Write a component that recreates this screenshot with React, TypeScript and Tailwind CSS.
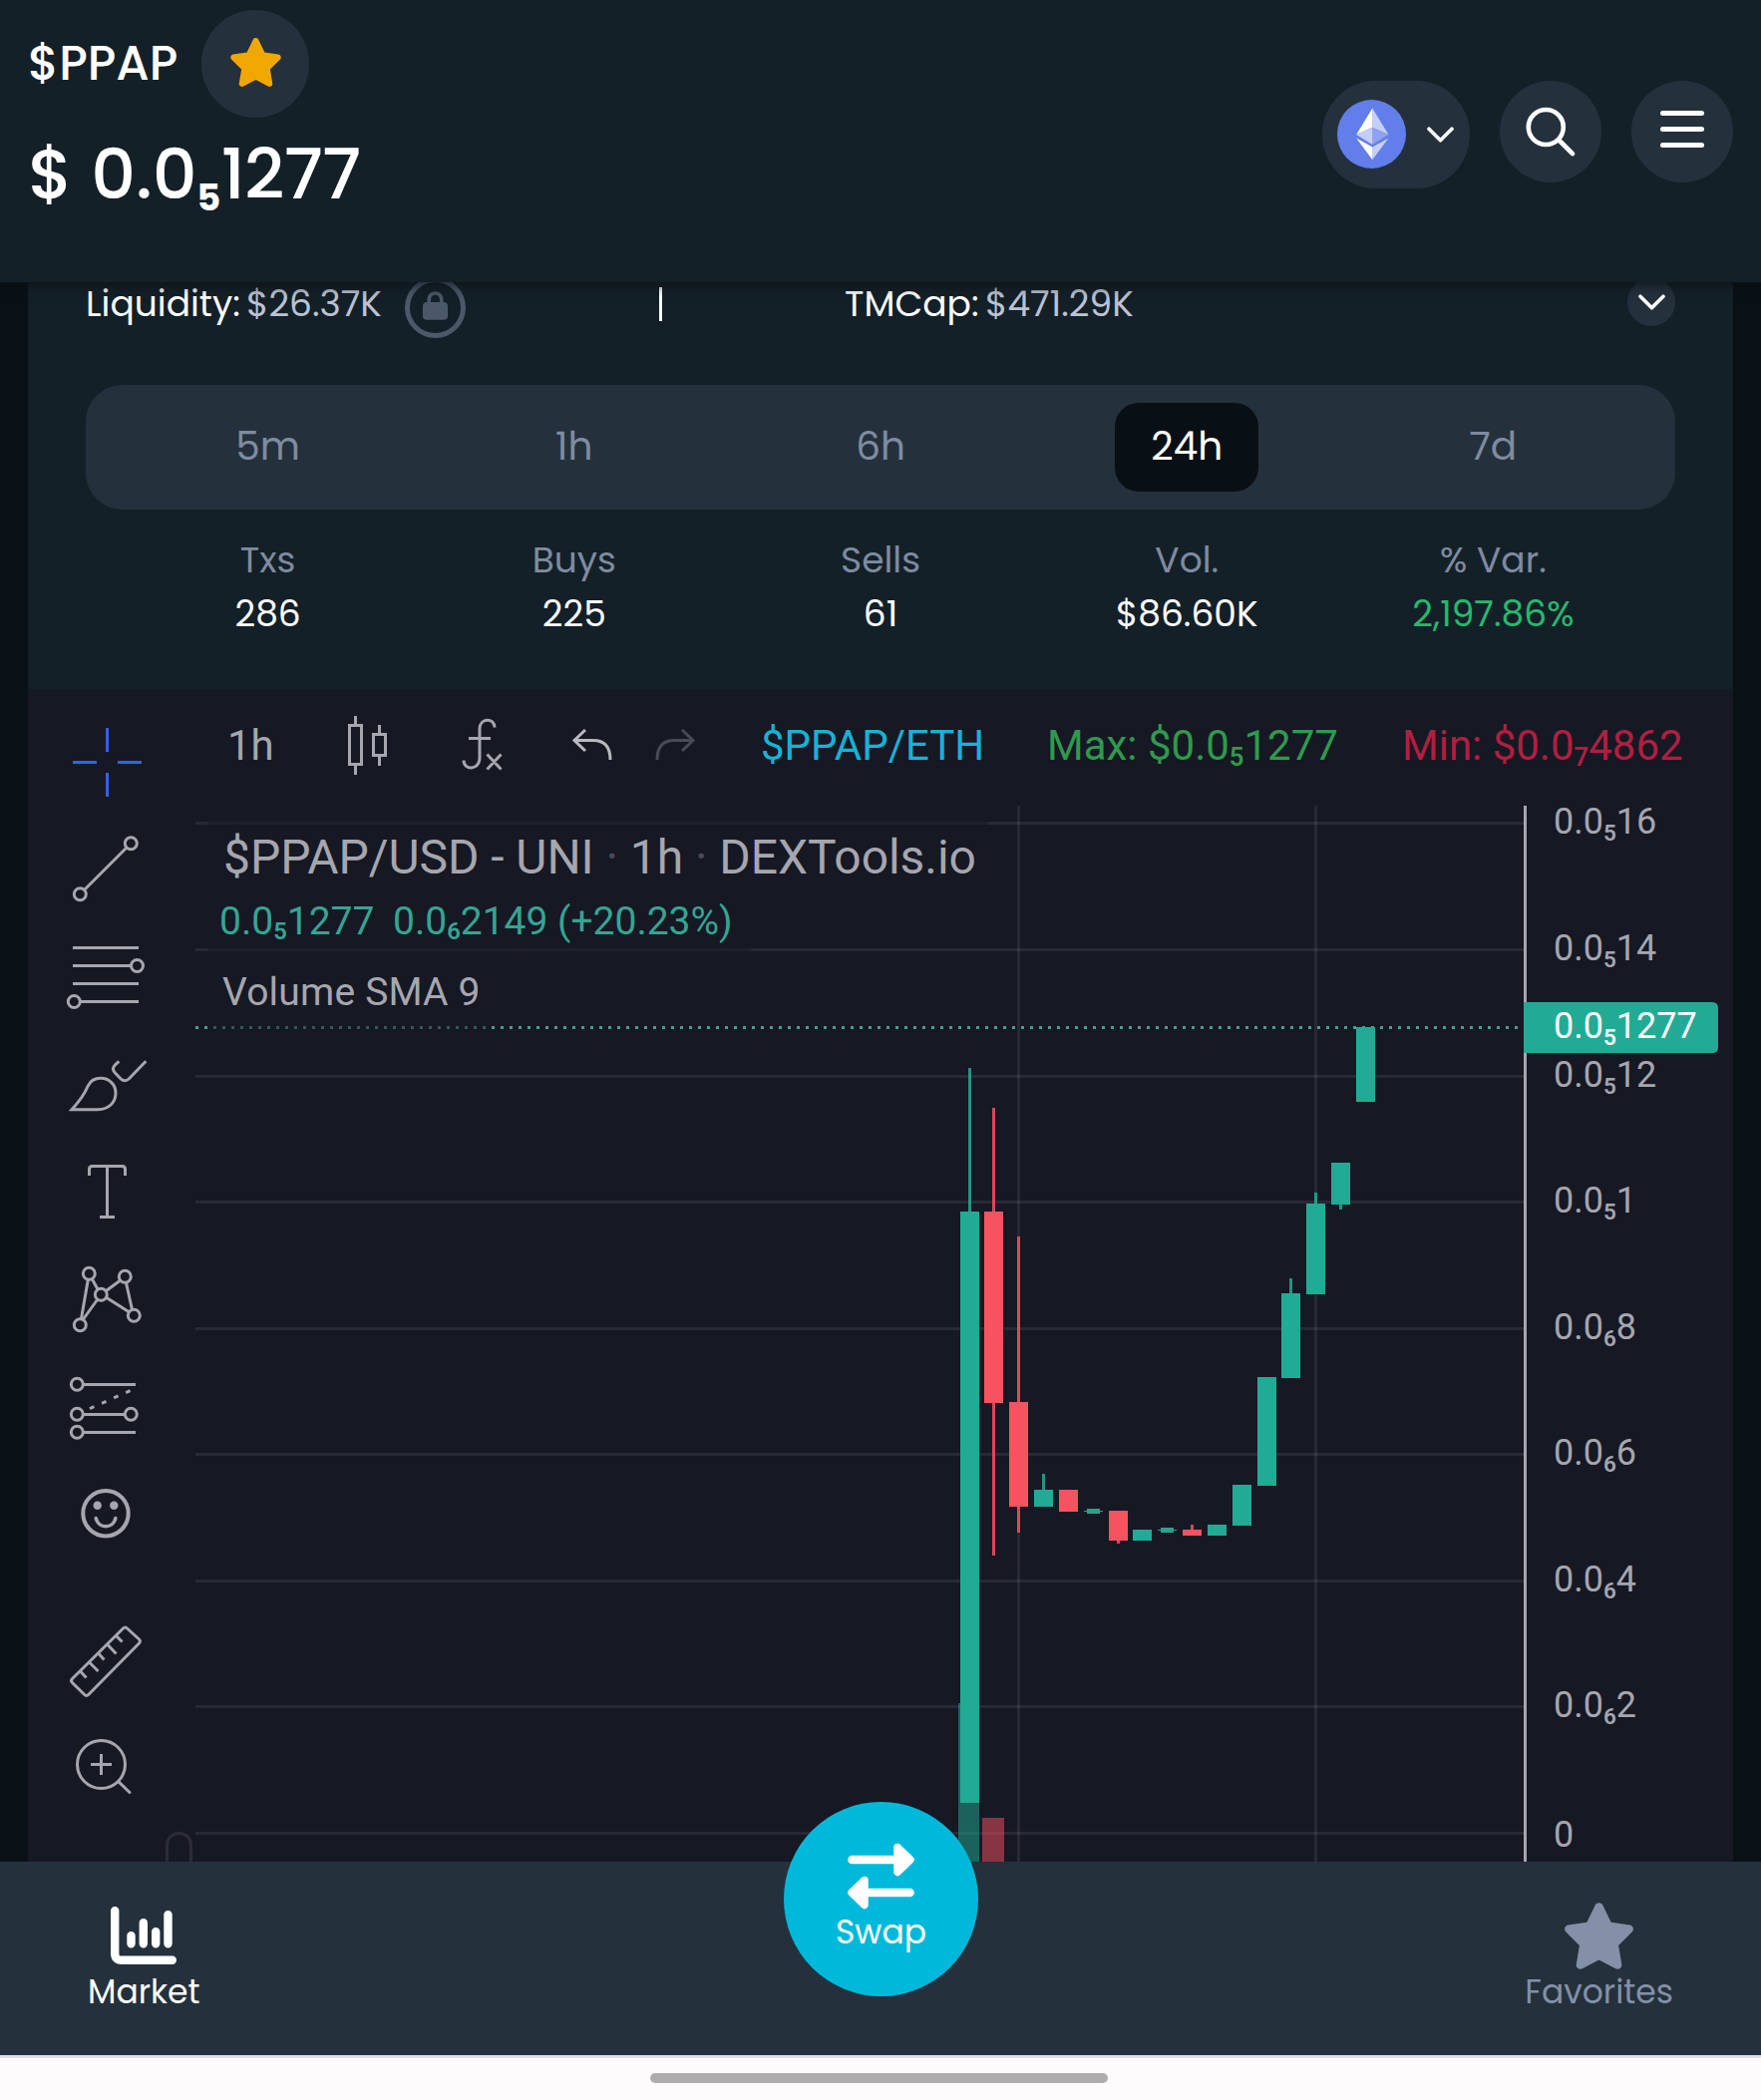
import type { ReactNode } from "react";
import { clsx } from "clsx";
import { FaLock, FaStar } from "react-icons/fa6";

const UP = "#22ab94";
const DOWN = "#f7525f";

const stats = [
  { tab: "5m", label: "Txs", value: "286" },
  { tab: "1h", label: "Buys", value: "225" },
  { tab: "6h", label: "Sells", value: "61" },
  { tab: "24h", label: "Vol.", value: "$86.60K", active: true },
  { tab: "7d", label: "% Var.", value: "2,197.86%", positive: true },
];

// plot coordinates: x, body top, body bottom, wick top, wick bottom, colour
const candles: [number, number, number, number, number, string][] = [
  [767, 407, 1000, 263, 1000, UP],
  [791, 407, 599, 303, 752, DOWN],
  [816, 598, 703, 432, 729, DOWN],
  [841, 686, 703, 670, 703, UP],
  [866, 686, 708, 686, 708, DOWN],
  [916, 707, 737, 707, 740, DOWN],
  [940, 726, 737, 726, 737, UP],
  [990, 726, 732, 721, 732, DOWN],
  [1015, 721, 732, 721, 732, UP],
  [1040, 681, 722, 681, 722, UP],
  [1065, 573, 682, 573, 682, UP],
  [1089, 489, 574, 474, 574, UP],
  [1114, 399, 490, 388, 490, UP],
  [1139, 358, 400, 358, 405, UP],
  [1164, 222, 297, 222, 297, UP],
];

const axis = [
  { y: 17, sub: "5", tail: "16" },
  { y: 144, sub: "5", tail: "14" },
  { y: 271, sub: "5", tail: "12" },
  { y: 397, sub: "5", tail: "1" },
  { y: 524, sub: "6", tail: "8" },
  { y: 650, sub: "6", tail: "6" },
  { y: 777, sub: "6", tail: "4" },
  { y: 903, sub: "6", tail: "2" },
];

const Sub = ({ children }: { children: ReactNode }) => (
  <span className="relative top-[0.22em] font-semibold text-[0.61em]">
    {children}
  </span>
);

const Tool = ({ children }: { children: ReactNode }) => (
  <svg
    className="size-[84px] shrink-0"
    fill="none"
    stroke="currentColor"
    strokeWidth="3"
    viewBox="0 0 84 84"
  >
    {children}
  </svg>
);

const Chevron = () => (
  <svg
    className="h-[16px] w-[27px]"
    fill="none"
    stroke="white"
    strokeLinecap="round"
    strokeLinejoin="round"
    strokeWidth="3.6"
    viewBox="0 0 27 16"
  >
    <path d="M2 2.2 13.5 13.8 25 2.2" />
  </svg>
);

const EthLogo = () => (
  <svg className="size-[69px]" viewBox="0 0 69 69">
    <circle cx="34.5" cy="34.5" fill="#627eea" r="34.5" />
    <path d="M35.3 8.5v19.2l16.2 7.2z" fill="#c5d0f8" />
    <path d="M35.3 8.5 19.2 34.9l16.1-7.2z" fill="#fff" />
    <path d="M35.3 27.7v17.2l16.2-10z" fill="#8ea2f0" />
    <path d="M19.2 34.9l16.1 10V27.7z" fill="#c3cdf8" />
    <path d="M35.3 47.4V60.3l16.2-21.9z" fill="#c5d0f8" />
    <path d="M35.3 60.3V47.4l-16.1-9z" fill="#fff" />
  </svg>
);

const Header = () => (
  <header className="relative z-10 flex h-[283px] justify-between bg-[#142028] pr-[28px] pl-[28px] text-white shadow-[0_4px_12px_rgba(12,16,20,0.7)]">
    <div>
      <div className="mt-[10px] flex h-[108px] items-center">
        <span className="w-[174px] font-medium text-[48px]">$PPAP</span>
        <span className="flex size-[108px] items-center justify-center rounded-full bg-[#24313c] pb-[3px]">
          <FaStar className="size-[55px] text-[#f0a800]" />
        </span>
      </div>
      <div className="flex h-[110px] items-center whitespace-pre pt-[4px] font-medium text-[70px] leading-none">
        <span>
          <span className="tracking-[-0.2px]">$ 0.0</span>
          <span className="relative top-[12px] font-bold text-[37px]">5</span>
          <span className="tracking-[-0.8px]">1277</span>
        </span>
      </div>
    </div>
    <div className="mt-[81px] flex items-start gap-[30px]">
      <div className="flex h-[108px] w-[148px] items-center rounded-full bg-[#24313c] pb-[1px] pl-[15px]">
        <EthLogo />
        <span className="ml-[21px]">
          <Chevron />
        </span>
      </div>
      <div className="size-[102px] rounded-full bg-[#24313c]">
        <svg
          className="size-full"
          fill="none"
          stroke="white"
          strokeLinecap="round"
          strokeWidth="4.6"
          viewBox="0 0 102 102"
        >
          <circle cx="46.3" cy="46.5" r="17.5" />
          <path d="M59.3 59.5 73 73.2" />
        </svg>
      </div>
      <div className="flex size-[102px] flex-col items-center gap-[11px] rounded-full bg-[#24313c] pt-[30px]">
        <span className="h-[5px] w-[44px] rounded-full bg-white" />
        <span className="h-[5px] w-[44px] rounded-full bg-white" />
        <span className="h-[5px] w-[44px] rounded-full bg-white" />
      </div>
    </div>
  </header>
);

const PairInfo = () => (
  <section className="h-[408px] bg-[#142028] px-[58px]">
    <div className="flex h-[43px] items-center text-[36px] text-white">
      <div className="flex w-[575px] items-center">
        <span className="w-[161px]">Liquidity:</span>
        <span className="w-[159px] text-[#bcc3d3]">$26.37K</span>
        <span className="relative top-[4px] flex size-[61px] items-center justify-center rounded-full border-[#4a586a] border-[5px] pb-[4px]">
          <FaLock className="h-[29px] w-[25px] text-[#4a586a]" />
        </span>
      </div>
      <span className="h-[34px] w-[3px] bg-white" />
      <span className="ml-[183px] w-[141px]">TMCap:</span>
      <span className="text-[#bcc3d3]">$471.29K</span>
      <span className="-top-[2px] relative ml-auto flex size-[48px] items-center justify-center rounded-full bg-[#24313c]">
        <Chevron />
      </span>
    </div>
    <div className="mt-[60px] grid h-[125px] grid-cols-5 items-center justify-items-center rounded-[37px] bg-[#24313c] px-[29px]">
      {stats.map((s) => (
        <span
          className={clsx(
            "flex h-[89px] items-center rounded-[24px] text-[39px]",
            s.active ? "w-[144px] justify-center bg-[#091015] text-white" : "text-[#7f8ba0]"
          )}
          key={s.tab}
        >
          {s.tab}
        </span>
      ))}
    </div>
    <div className="mt-[26px] grid grid-cols-5 px-[29px] text-center text-[36px] leading-[50px]">
      {stats.map((s) => (
        <div key={s.label}>
          <div className="text-[#7f8ba0]">{s.label}</div>
          <div
            className={clsx(
              "mt-[4px]",
              s.positive ? "text-[#25ba6e]" : "text-white"
            )}
          >
            {s.value}
          </div>
        </div>
      ))}
    </div>
  </section>
);

const DrawingTools = () => (
  <div className="flex w-[168px] shrink-0 flex-col gap-[24px] pt-[31px] pl-[37px] text-[#a6a6ae]">
    <span className="text-[#3163e6]">
      <Tool>
        <path d="M42.5 8v24M42.5 53v24M8 42.5h24M53 42.5h24" />
      </Tool>
    </span>
    <Tool>
      <circle cx="66.3" cy="15.7" r="6" />
      <circle cx="15.3" cy="66.7" r="6" />
      <path d="M62 20 19.5 62.5" />
    </Tool>
    <Tool>
      <path d="M8 12.5h66M8 30.5h58M8 48.5h66M16 66.5h58" />
      <circle cx="72.5" cy="30.5" r="6" />
      <circle cx="9.3" cy="66.5" r="6" />
    </Tool>
    <Tool>
      <path d="M7 66.7H33c11 0 18-7 18-16.5C51 41 44 35.3 36 35.3c-6 0-10.5 3-12.7 7.5C20 51 16 57 7 66.7z" />
      <path d="M54.3 18.3 50.5 21.8c-2.5 2.5-2.5 5.5-.3 8l5.5 5.7c2.5 2.8 6 2.8 8.5.5L81.3 18.3" />
    </Tool>
    <Tool>
      <path d="M24.5 25V18.5q0-3 3-3h30q3 0 3 3V25M42.5 15.5v51M35 66.5h15" />
    </Tool>
    <Tool>
      <circle cx="24.3" cy="15.3" r="6" />
      <circle cx="60.3" cy="18.3" r="6" />
      <circle cx="36.3" cy="36.3" r="6" />
      <circle cx="15.3" cy="66.7" r="6" />
      <circle cx="69.3" cy="57.3" r="6" />
      <path d="M23.3 21.3 16.5 60.5M27.5 21l5.5 10M41.5 32.5 55 22.5M32.5 41.5 18.5 61M42 39.5l22 14M61.5 24.5l6 27" />
    </Tool>
    <Tool>
      <circle cx="12.3" cy="18.3" r="6" />
      <circle cx="12.3" cy="48.3" r="6" />
      <circle cx="12.3" cy="66.3" r="6" />
      <circle cx="66.3" cy="48.3" r="6" />
      <path d="M18.3 18.5H71M18.3 48.5H60M18.3 66.5H71" />
      <path d="M25 42.6 67 24" strokeDasharray="4.8 8.4" />
    </Tool>
    <Tool>
      <circle cx="41" cy="39.7" r="22.7" strokeWidth="4" />
      <circle cx="32.7" cy="31.7" fill="currentColor" r="4.2" stroke="none" />
      <circle cx="49.3" cy="31.7" fill="currentColor" r="4.2" stroke="none" />
      <path d="M31.3 44.5c2 11 17.5 11 19.5 0" strokeLinecap="round" strokeWidth="3.6" />
    </Tool>
    <span className="mt-[38px]">
      <Tool>
        <path d="M58.5 9q2-2 4 0L74.5 20q2 2 0 4L23.7 75.5q-2 2-4 0L7.5 63.5q-2-2 0-4z" />
        <path d="m51 16 6.5 6.5M42.5 25l9 9.5M33.5 34l6 6.5M24.5 43l9 9M15.5 52l6 6.5" />
      </Tool>
    </span>
    <Tool>
      <circle cx="36.5" cy="37.5" r="24" />
      <path d="M26 37.5h21M36.5 27v21" />
      <path d="M53.7 54.7 65 65.5" strokeLinecap="round" />
    </Tool>
    <span className="-mt-[3px] ml-[101px] h-[60px] w-[27px] shrink-0 rounded-t-[13px] border-[#2b2c37] border-[3px] border-b-0" />
  </div>
);

const ChartToolbar = () => (
  <div className="flex h-[117px] items-center whitespace-nowrap pb-[4px] text-[#a6a6ae] text-[42px]">
    <span className="w-[150px] pl-[32px]">1h</span>
    <svg className="h-[62px] w-[45px]" fill="none" stroke="currentColor" strokeWidth="3" viewBox="0 0 45 62">
      <path d="M4.5 10.5h12v39h-12zM10.5 1v9.5M10.5 49.5v10.5M28.5 19.5h12v21h-12zM34.5 10v9.5M34.5 40.5v10.5" />
    </svg>
    <svg className="ml-[70px] h-[62px] w-[45px]" fill="none" stroke="currentColor" strokeWidth="3" viewBox="0 0 45 62">
      <path d="M35 12.5c0-10-15-10-15 1.5V43c0 13-16 13-16 2.5M9 23.5h22M27.5 39.5l14 15M41.5 39.5l-14 15" />
    </svg>
    <svg className="ml-[66px] h-[40px] w-[42px]" fill="none" stroke="#b9b9c0" strokeWidth="3" viewBox="0 0 42 40">
      <path d="M15 4 4 14.5 15 25M4 14.5h19c11 0 17 6.5 17 19.5" />
    </svg>
    <svg className="ml-[42px] h-[40px] w-[42px]" fill="none" stroke="#484a54" strokeWidth="3" viewBox="0 0 42 40">
      <path d="m28 4 11 10.5L28 25M39 14.5H20C9 14.5 3 21 3 34" />
    </svg>
    <span className="ml-[65px] w-[287px] text-[#17b3d6]">$PPAP/ETH</span>
    <span className="w-[356px] text-[#2f9a4c]">
      Max: $0.0<Sub>5</Sub>1277
    </span>
    <span className="text-[#b01f40]">
      Min: $0.0<Sub>7</Sub>4862
    </span>
  </div>
);

const Plot = () => (
  <svg className="h-[1059px] w-[1542px] overflow-visible" viewBox="0 0 1542 1059">
    <g fill="#b4b8c8" fillOpacity="0.11">
      {axis.map((a) => (
        <rect height="3" key={a.y} width="1332" x="0" y={a.y - 1} />
      ))}
      <rect height="3" width="1332" x="0" y="1029" />
      <rect height="1059" width="3" x="824" y="0" />
      <rect height="1059" width="3" x="1122" y="0" />
    </g>
    <rect fill={UP} fillOpacity="0.5" height="159" width="21" x="765" y="900" />
    <rect fill={DOWN} fillOpacity="0.5" height="44" width="22" x="789" y="1015" />
    <line stroke="#459e92" strokeDasharray="3 6" strokeWidth="3" x1="0" x2="1330" y1="222.5" y2="222.5" />
    {candles.map(([x, top, bottom, high, low, color]) => (
      <g fill={color} key={x}>
        <rect height={low - high} opacity="0.85" width="3" x={x + 8} y={high} />
        <rect height={bottom - top} width="19" x={x} y={top} />
      </g>
    ))}
    {/* flat candles */}
    <path d="M891 707h19v1h-19zM894 705h13v5h-13zM965 726h19v1h-19zM968 724h13v5h-13z" fill="#2fa08e" />
    <rect fill="#a6a6ae" height="1059" width="3" x="1332" y="0" />
    <g fill="#a6a6ae" fontSize="36">
      {axis.map((a) => (
        <text key={a.y} x="1362" y={a.y + 10.5}>
          0.0
          <tspan dy="7" fontSize="22.5" fontWeight="600">{a.sub}</tspan>
          <tspan dy="-7">{a.tail}</tspan>
        </text>
      ))}
      <text x="1362" y="1044">0</text>
    </g>
    <path d="M1332 197h189q6 0 6 6v39q0 6-6 6h-189z" fill={UP} />
    <text fill="white" fontSize="36" x="1362" y="233">
      0.0
      <tspan dy="7" fontSize="22.5" fontWeight="600">5</tspan>
      <tspan dy="-7">1277</tspan>
    </text>
  </svg>
);

const Legend = () => (
  <div className="absolute top-[12px] left-[12px] flex flex-col items-start whitespace-pre text-[#a6a6ae]">
    <div className="h-[70px] w-[783px] bg-[#161824]/50 pl-[16px] text-[48px] leading-[80px] tracking-[-0.05px]">
      $PPAP/USD - UNI<span className="text-[#4a4b55]"> · </span>1h<span className="text-[#4a4b55]"> · </span>DEXTools.io
    </div>
    <div className="flex h-[68px] w-[545px] bg-[#161824]/50 pl-[12px] text-[#35a592] text-[39px] leading-[68px]">
      <span className="w-[174px]">
        0.0<Sub>5</Sub>1277
      </span>
      <span>
        0.0<Sub>6</Sub>2149 (+20.23%)
      </span>
    </div>
    <div className="h-[76px] w-[285px] bg-[#161824]/50 pl-[15px] text-[39px] leading-[74px] tracking-[0.2px]">
      Volume SMA 9
    </div>
  </div>
);

const Chart = () => (
  <section className="flex h-[1176px] overflow-hidden bg-[#161824] font-[Roboto,sans-serif]">
    <DrawingTools />
    <div>
      <ChartToolbar />
      <div className="relative">
        <Plot />
        <Legend />
      </div>
    </div>
  </section>
);

const BottomNav = () => (
  <nav className="relative flex h-[194px] justify-between bg-[#24313c] pr-[88px] pl-[88px] text-[33px] leading-[40px]">
    <div className="flex flex-col items-center pt-[45px] text-white">
      <svg className="h-[58px] w-[66px]" fill="none" stroke="white" strokeLinecap="round" strokeWidth="8.4" viewBox="0 0 66 58">
        <path d="M4.2 4.2V47q0 6.8 6.8 6.8H61.8M20.5 29.2v8.1M32.8 16.2v21.1M45.2 25.2v12.1M57.5 8.2v29.1" />
      </svg>
      <span className="mt-[8px]">Market</span>
    </div>
    <div className="-top-[60px] absolute left-[786px] flex size-[195px] flex-col items-center rounded-full bg-[#00b9da] text-white">
      <svg className="mt-[41px] h-[67px] w-[67px]" fill="white" stroke="white" strokeLinecap="round" strokeLinejoin="round" viewBox="0 0 67 67">
        <path d="M4.5 17H48M62.5 50H19" strokeWidth="8.6" />
        <path d="M50 4.5 63 17 50 29.5zM17 37.5 4 50l13 12.5z" strokeWidth="7.5" />
      </svg>
      <span className="mt-[3px]">Swap</span>
    </div>
    <div className="flex flex-col items-center pt-[37px] text-[#8390a8]">
      <FaStar className="size-[75px]" />
      <span className="-mt-[1px]">Favorites</span>
    </div>
  </nav>
);

export default function App() {
  return (
    <div className="h-[2106px] w-[1766px] overflow-hidden bg-[#091116] font-[Poppins,Inter,sans-serif]">
      <Header />
      <main className="mx-[28px]">
        <PairInfo />
        <Chart />
      </main>
      <BottomNav />
      <div className="h-[45px] border-[#e2dce8] border-t-[3px] bg-[#fefbfc] pt-[15px] pl-[652px]">
        <div className="h-[10px] w-[459px] rounded-full bg-[#aeacad]" />
      </div>
    </div>
  );
}
